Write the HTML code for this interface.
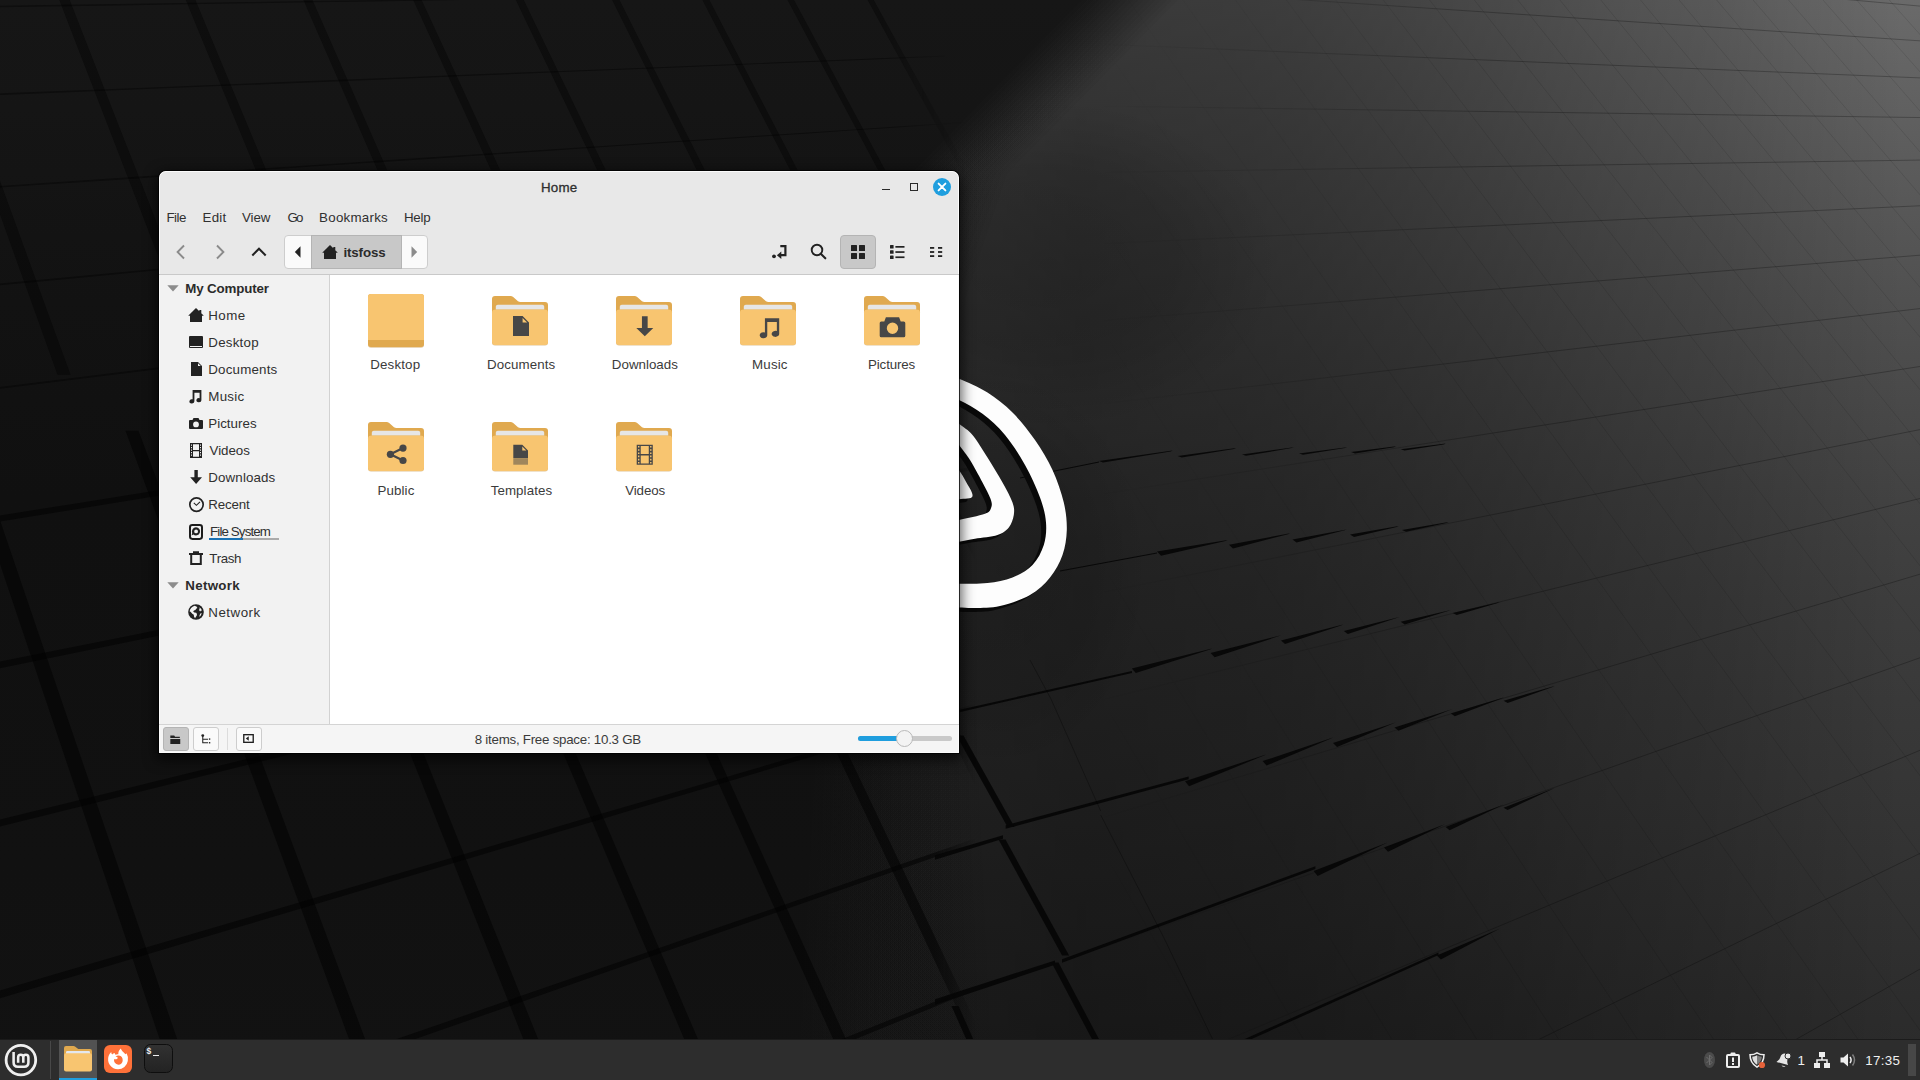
<!DOCTYPE html>
<html lang="en"><head><meta charset="utf-8"><title>Home</title>
<style>

*{box-sizing:border-box;margin:0;padding:0}
html,body{width:1920px;height:1080px;overflow:hidden;background:#161616}
body{position:relative;font-family:"Liberation Sans",sans-serif;font-size:13.33px;color:#303030;-webkit-font-smoothing:antialiased}
#wall{position:absolute;left:0;top:0;overflow:hidden}
.abs{position:absolute}
.t{position:absolute;white-space:nowrap;line-height:16px;height:16px;margin-top:1px}
#win{position:absolute;left:159px;top:171px;width:800px;height:582px;background:#e8e8e8;border-radius:7px 7px 0 0;box-shadow:0 0 0 1px rgba(0,0,0,.75),0 4px 14px 2px rgba(0,0,0,.7);overflow:hidden}
#win:after{content:"";position:absolute;left:0;top:0;right:0;bottom:0;border:1px solid #fbfbfb;border-radius:7px 7px 0 0;pointer-events:none}
#title{color:#2e2e2e;-webkit-text-stroke:.3px #2e2e2e}
.menu{color:#303030}
#tbline{left:0;top:103px;width:800px;height:1px;background:#c9c9c9;z-index:3}
#side{left:1px;top:104px;width:169px;height:449px;background:#f2f2f2}
#sideline{left:170px;top:104px;width:1px;height:449px;background:#d2d2d2}
#content{left:171px;top:104px;width:628px;height:449px;background:#fff}
#stline{left:0;top:553px;width:800px;height:1px;background:#d4d4d4;z-index:3}
#status{left:1px;top:554px;width:798px;height:27px;background:#f5f5f5}
.hdr{font-weight:bold;color:#2b2b2b}
.si{color:#303030}
.lbl{color:#3b3b3b}
.btn{position:absolute;border:1px solid #cdcdcd;background:#fafafa;border-radius:4px}
.btn.on{background:#c8c8c8;border-color:#b4b4b4}
#panel{position:absolute;left:0;top:1040px;width:1920px;height:40px;background:#2d2d2d;box-shadow:0 -1px 0 #1b1b1b}
.pt{color:#f0f0f0}
svg{position:absolute;overflow:visible}
#wall{overflow:hidden}

</style></head>
<body>
<svg id="wall" width="1920" height="1080" viewBox="0 0 1920 1080">
<defs>
<linearGradient id="lit" x1="0" y1="0" x2="0" y2="1080" gradientUnits="userSpaceOnUse"><stop offset="0.0000" stop-color="#6a6a6a"/><stop offset="0.0111" stop-color="#696969"/><stop offset="0.0926" stop-color="#616161"/><stop offset="0.1852" stop-color="#585858"/><stop offset="0.2778" stop-color="#505050"/><stop offset="0.3704" stop-color="#494949"/><stop offset="0.4630" stop-color="#424242"/><stop offset="0.5556" stop-color="#3d3d3d"/><stop offset="0.6481" stop-color="#393939"/><stop offset="0.7407" stop-color="#353535"/><stop offset="0.8333" stop-color="#313131"/><stop offset="0.9444" stop-color="#2c2c2c"/><stop offset="1.0000" stop-color="#2a2a2a"/></linearGradient><linearGradient id="ax" x1="0" y1="0" x2="1920" y2="0" gradientUnits="userSpaceOnUse"><stop offset="0.0000" stop-color="#000" stop-opacity="0.450"/><stop offset="0.5208" stop-color="#000" stop-opacity="0.440"/><stop offset="0.5625" stop-color="#000" stop-opacity="0.470"/><stop offset="0.5990" stop-color="#000" stop-opacity="0.455"/><stop offset="0.6458" stop-color="#000" stop-opacity="0.440"/><stop offset="0.6771" stop-color="#000" stop-opacity="0.420"/><stop offset="0.7292" stop-color="#000" stop-opacity="0.370"/><stop offset="0.7812" stop-color="#000" stop-opacity="0.310"/><stop offset="0.8333" stop-color="#000" stop-opacity="0.240"/><stop offset="0.8906" stop-color="#000" stop-opacity="0.170"/><stop offset="0.9375" stop-color="#000" stop-opacity="0.090"/><stop offset="0.9917" stop-color="#000" stop-opacity="0.000"/><stop offset="1.0000" stop-color="#000" stop-opacity="0.000"/></linearGradient><linearGradient id="shadec" x1="0" y1="0" x2="0" y2="1080" gradientUnits="userSpaceOnUse"><stop offset="0" stop-color="#161616"/><stop offset="0.1" stop-color="#151515"/><stop offset="0.28" stop-color="#121212"/><stop offset="0.46" stop-color="#101010"/><stop offset="0.8" stop-color="#111"/><stop offset="1" stop-color="#121212"/></linearGradient><radialGradient id="dip" cx="1050" cy="265" r="230" gradientUnits="userSpaceOnUse" gradientTransform="translate(1050,265) scale(1,0.72) translate(-1050,-265)"><stop offset="0" stop-color="#000" stop-opacity="0.17"/><stop offset="0.55" stop-color="#000" stop-opacity="0.13"/><stop offset="1" stop-color="#000" stop-opacity="0"/></radialGradient><radialGradient id="dip2" cx="1000" cy="570" r="200" gradientUnits="userSpaceOnUse" gradientTransform="translate(1000,570) scale(0.75,1) translate(-1000,-570)"><stop offset="0" stop-color="#000" stop-opacity="0.13"/><stop offset="0.6" stop-color="#000" stop-opacity="0.1"/><stop offset="1" stop-color="#000" stop-opacity="0"/></radialGradient><filter id="blur" filterUnits="userSpaceOnUse" x="-120" y="-120" width="1500" height="1320"><feGaussianBlur stdDeviation="26"/></filter>
<linearGradient id="shade" x1="1180" y1="28" x2="1085" y2="-25" gradientUnits="userSpaceOnUse">
<stop offset="0" stop-color="#111" stop-opacity="0"/><stop offset="1" stop-color="#111" stop-opacity="0.95"/>
</linearGradient>
<linearGradient id="leftdark" x1="1250" y1="0" x2="750" y2="0" gradientUnits="userSpaceOnUse">
<stop offset="0" stop-color="#131313" stop-opacity="0"/><stop offset="1" stop-color="#131313" stop-opacity="1"/>
</linearGradient>
<linearGradient id="fadeL" x1="1100" y1="0" x2="1500" y2="0" gradientUnits="userSpaceOnUse">
<stop offset="0" stop-color="#fff" stop-opacity="0"/><stop offset="1" stop-color="#fff" stop-opacity="1"/>
</linearGradient>
<mask id="mR"><rect width="1920" height="1080" fill="url(#fadeL)"/></mask>
<linearGradient id="fadeR" x1="935" y1="0" x2="975" y2="0" gradientUnits="userSpaceOnUse">
<stop offset="0" stop-color="#fff" stop-opacity="1"/><stop offset="1" stop-color="#fff" stop-opacity="0"/>
</linearGradient>
<mask id="mL"><rect width="1920" height="1080" fill="url(#fadeR)"/></mask>
<linearGradient id="fadeT" x1="880" y1="0" x2="965" y2="0" gradientUnits="userSpaceOnUse">
<stop offset="0" stop-color="#fff" stop-opacity="1"/><stop offset="1" stop-color="#fff" stop-opacity="0"/>
</linearGradient>
<mask id="mT"><rect width="1920" height="1080" fill="url(#fadeT)"/></mask>
</defs>
<rect width="1920" height="1080" fill="url(#lit)"/>
<rect width="1920" height="1080" fill="url(#ax)"/>
<rect x="780" y="60" width="540" height="420" fill="url(#dip)"/>
<rect x="840" y="360" width="320" height="420" fill="url(#dip2)"/>
<g fill="url(#shadec)"><polygon points="-100,-100 1276.0,-100 1178.0,0 1007.0,174 965.0,300 975.0,700 997.0,1180 -100,1180" fill-opacity="0.0556"/><polygon points="-100,-100 1270.4,-100 1172.4,0 1001.4,174 957.9,300 965.8,700 985.0,1180 -100,1180" fill-opacity="0.0588"/><polygon points="-100,-100 1264.7,-100 1166.7,0 995.7,174 950.9,300 956.6,700 973.0,1180 -100,1180" fill-opacity="0.0625"/><polygon points="-100,-100 1259.1,-100 1161.1,0 990.1,174 943.8,300 947.5,700 961.0,1180 -100,1180" fill-opacity="0.0667"/><polygon points="-100,-100 1253.4,-100 1155.4,0 984.4,174 936.8,300 938.3,700 949.0,1180 -100,1180" fill-opacity="0.0714"/><polygon points="-100,-100 1247.8,-100 1149.8,0 978.8,174 929.7,300 929.1,700 937.0,1180 -100,1180" fill-opacity="0.0769"/><polygon points="-100,-100 1242.1,-100 1144.1,0 973.1,174 922.6,300 919.9,700 925.0,1180 -100,1180" fill-opacity="0.0833"/><polygon points="-100,-100 1236.5,-100 1138.5,0 967.5,174 915.6,300 910.8,700 913.0,1180 -100,1180" fill-opacity="0.0909"/><polygon points="-100,-100 1230.8,-100 1132.8,0 961.8,174 908.5,300 901.6,700 901.0,1180 -100,1180" fill-opacity="0.1000"/><polygon points="-100,-100 1225.2,-100 1127.2,0 956.2,174 901.5,300 892.4,700 889.0,1180 -100,1180" fill-opacity="0.1111"/><polygon points="-100,-100 1219.5,-100 1121.5,0 950.5,174 894.4,300 883.2,700 877.0,1180 -100,1180" fill-opacity="0.1250"/><polygon points="-100,-100 1213.9,-100 1115.9,0 944.9,174 887.4,300 874.1,700 865.0,1180 -100,1180" fill-opacity="0.1429"/><polygon points="-100,-100 1208.2,-100 1110.2,0 939.2,174 880.3,300 864.9,700 853.0,1180 -100,1180" fill-opacity="0.1667"/><polygon points="-100,-100 1202.6,-100 1104.6,0 933.6,174 873.2,300 855.7,700 841.0,1180 -100,1180" fill-opacity="0.2000"/><polygon points="-100,-100 1196.9,-100 1098.9,0 927.9,174 866.2,300 846.5,700 829.0,1180 -100,1180" fill-opacity="0.2500"/><polygon points="-100,-100 1191.3,-100 1093.3,0 922.3,174 859.1,300 837.4,700 817.0,1180 -100,1180" fill-opacity="0.3333"/><polygon points="-100,-100 1185.6,-100 1087.6,0 916.6,174 852.1,300 828.2,700 805.0,1180 -100,1180" fill-opacity="0.5000"/><polygon points="-100,-100 1180.0,-100 1082.0,0 911.0,174 845.0,300 819.0,700 793.0,1180 -100,1180" fill-opacity="1.0000"/></g>
<g fill="#030303" fill-opacity="0.6" mask="url(#mL)"><polygon points="-879.5,571.9 -864.7,655.7 -849.4,742.0 -833.7,831.1 -817.5,922.9 -800.8,1017.7 -783.5,1115.6 -765.7,1216.7 -747.3,1321.3 -728.3,1429.4 -708.6,1541.3 -688.2,1657.1 -667.1,1777.2 -645.2,1901.6 -622.5,2030.8 -599.0,2164.8 -574.5,2304.1 -549.1,2449.0 -510.1,2449.0 -537.0,2304.1 -562.9,2164.8 -587.8,2030.8 -611.7,1901.6 -634.8,1777.2 -657.0,1657.1 -678.5,1541.3 -699.2,1429.4 -719.2,1321.3 -738.6,1216.7 -757.3,1115.6 -775.4,1017.7 -792.9,922.9 -809.8,831.1 -826.3,742.0 -842.2,655.7 -857.7,571.9"/><polygon points="-633.6,537.4 -616.1,615.9 -598.2,696.8 -579.7,780.0 -560.6,865.6 -541.0,953.9 -520.8,1044.8 -500.0,1138.6 -478.5,1235.4 -456.3,1335.2 -433.4,1438.3 -409.8,1544.8 -385.4,1655.0 -360.1,1768.9 -334.0,1886.7 -306.9,2008.8 -278.9,2135.2 -249.9,2266.4 -216.4,2266.4 -246.6,2135.2 -275.8,2008.8 -303.9,1886.7 -331.0,1768.9 -357.3,1655.0 -382.6,1544.8 -407.1,1438.3 -430.8,1335.2 -453.8,1235.4 -476.1,1138.6 -497.6,1044.8 -518.5,953.9 -538.8,865.6 -558.5,780.0 -577.6,696.8 -596.1,615.9 -614.2,537.4"/><polygon points="-413.7,506.5 -394.2,580.4 -374.2,656.4 -353.6,734.5 -332.4,814.7 -310.6,897.3 -288.2,982.2 -265.2,1069.6 -241.5,1159.6 -217.0,1252.3 -191.9,1347.9 -165.9,1446.4 -139.1,1548.1 -111.5,1653.0 -83.0,1761.3 -53.5,1873.3 -23.1,1989.0 8.4,2108.7 37.5,2108.7 5.0,1989.0 -26.3,1873.3 -56.7,1761.3 -86.0,1653.0 -114.4,1548.1 -142.0,1446.4 -168.7,1347.9 -194.5,1252.3 -219.6,1159.6 -244.0,1069.6 -267.7,982.2 -290.6,897.3 -313.0,814.7 -334.7,734.5 -355.8,656.4 -376.3,580.4 -396.3,506.5"/><polygon points="-215.9,478.7 -194.9,548.5 -173.3,620.2 -151.1,693.7 -128.4,769.2 -105.0,846.7 -81.0,926.3 -56.3,1008.2 -31.0,1092.3 -4.9,1178.8 21.9,1267.8 49.5,1359.5 77.9,1453.8 107.2,1551.0 137.4,1651.2 168.4,1754.5 200.5,1861.1 233.6,1971.1 259.1,1971.1 225.2,1861.1 192.4,1754.5 160.6,1651.2 129.7,1551.0 99.8,1453.8 70.7,1359.5 42.5,1267.8 15.1,1178.8 -11.5,1092.3 -37.4,1008.2 -62.6,926.3 -87.1,846.7 -110.9,769.2 -134.1,693.7 -156.7,620.2 -178.7,548.5 -200.2,478.7"/><polygon points="-37.1,453.5 -14.8,519.7 7.9,587.5 31.3,657.0 55.2,728.2 79.7,801.3 104.9,876.2 130.7,953.1 157.3,1032.1 184.5,1113.2 212.4,1196.5 241.2,1282.1 270.7,1370.1 301.1,1460.6 332.3,1553.7 364.5,1649.6 397.6,1748.3 431.7,1850.0 454.2,1850.0 419.5,1748.3 385.7,1649.6 353.0,1553.7 321.1,1460.6 290.2,1370.1 260.1,1282.1 230.9,1196.5 202.4,1113.2 174.7,1032.1 147.8,953.1 121.5,876.2 95.9,801.3 71.0,728.2 46.6,657.0 22.9,587.5 -0.2,519.7 -22.8,453.5"/><polygon points="125.5,430.7 148.6,493.5 172.2,557.9 196.4,623.7 221.2,691.2 246.6,760.2 272.6,831.0 299.2,903.5 326.6,977.9 354.6,1054.2 383.3,1132.4 412.8,1212.7 443.1,1295.2 474.2,1379.8 506.1,1466.8 538.9,1556.2 572.6,1648.1 607.3,1742.6 627.4,1742.6 592.1,1648.1 557.9,1556.2 524.5,1466.8 492.1,1379.8 460.6,1295.2 429.8,1212.7 399.9,1132.4 370.7,1054.2 342.3,977.9 314.6,903.5 287.6,831.0 261.2,760.2 235.5,691.2 210.4,623.7 185.8,557.9 161.9,493.5 138.5,430.7"/><polygon points="273.8,409.8 297.6,469.7 321.8,530.9 346.7,593.5 372.0,657.5 398.0,723.0 424.6,790.0 451.8,858.6 479.6,928.9 508.2,1000.9 537.4,1074.7 567.4,1150.3 598.1,1227.8 629.6,1307.3 661.9,1388.9 695.1,1472.6 729.1,1558.5 764.1,1646.7 782.0,1646.7 746.6,1558.5 712.1,1472.6 678.5,1388.9 645.8,1307.3 613.9,1227.8 582.8,1150.3 552.4,1074.7 522.8,1000.9 493.9,928.9 465.7,858.6 438.2,790.0 411.3,723.0 385.0,657.5 359.4,593.5 334.3,530.9 309.7,469.7 285.7,409.8"/><polygon points="409.8,390.7 434.0,447.8 458.7,506.2 483.9,565.8 509.7,626.7 536.1,689.0 563.0,752.7 590.6,817.8 618.8,884.4 647.6,952.5 677.1,1022.3 707.3,1093.7 738.3,1166.9 770.0,1241.8 802.4,1318.5 835.7,1397.2 869.8,1477.9 904.8,1560.6 921.0,1560.6 885.6,1477.9 851.1,1397.2 817.4,1318.5 784.6,1241.8 752.6,1166.9 721.3,1093.7 690.7,1022.3 660.9,952.5 631.8,884.4 603.3,817.8 575.4,752.7 548.2,689.0 521.6,626.7 495.6,565.8 470.1,506.2 445.1,447.8 420.7,390.7"/><polygon points="534.8,373.1 559.3,427.8 584.3,483.5 609.8,540.4 635.8,598.5 662.4,657.9 689.6,718.5 717.3,780.5 745.7,843.7 774.7,908.4 804.3,974.6 834.6,1042.3 865.6,1111.5 897.3,1182.3 929.8,1254.8 963.0,1329.0 997.1,1404.9 1031.9,1482.8 1046.6,1482.8 1011.4,1404.9 977.0,1329.0 943.5,1254.8 910.7,1182.3 878.7,1111.5 847.4,1042.3 816.8,974.6 786.9,908.4 757.6,843.7 729.0,780.5 701.0,718.5 673.6,657.9 646.8,598.5 620.5,540.4 594.8,483.5 569.6,427.8 544.9,373.1"/><polygon points="650.2,356.9 674.9,409.3 700.0,462.6 725.7,517.1 751.9,572.6 778.6,629.3 805.8,687.2 833.6,746.2 862.0,806.5 891.0,868.1 920.7,931.0 950.9,995.2 981.9,1060.9 1013.5,1128.0 1045.8,1196.7 1078.9,1266.9 1112.7,1338.7 1147.3,1412.2 1160.6,1412.2 1125.7,1338.7 1091.6,1266.9 1058.3,1196.7 1025.7,1128.0 993.8,1060.9 962.6,995.2 932.1,931.0 902.2,868.1 873.0,806.5 844.3,746.2 816.3,687.2 788.8,629.3 761.9,572.6 735.6,517.1 709.7,462.6 684.4,409.3 659.5,356.9"/><polygon points="757.0,341.9 781.8,392.1 807.0,443.3 832.7,495.5 858.9,548.7 885.6,602.9 912.9,658.3 940.7,714.7 969.0,772.2 997.9,831.0 1027.5,890.9 1057.6,952.1 1088.4,1014.6 1119.8,1078.4 1151.9,1143.5 1184.7,1210.1 1218.2,1278.2 1252.4,1347.8 1264.6,1347.8 1230.1,1278.2 1196.3,1210.1 1163.3,1143.5 1130.9,1078.4 1099.3,1014.6 1068.3,952.1 1038.0,890.9 1008.2,831.0 979.1,772.2 950.5,714.7 922.6,658.3 895.1,602.9 868.2,548.7 841.9,495.5 816.0,443.3 790.6,392.1 765.7,341.9"/><polygon points="856.2,327.9 881.0,376.2 906.2,425.4 931.9,475.5 958.0,526.6 984.7,578.6 1011.8,631.5 1039.5,685.6 1067.7,740.6 1096.5,796.7 1125.8,854.0 1155.8,912.4 1186.3,971.9 1217.4,1032.7 1249.2,1094.8 1281.7,1158.1 1314.8,1222.8 1348.6,1288.8 1359.8,1288.8 1325.8,1222.8 1292.4,1158.1 1259.7,1094.8 1227.7,1032.7 1196.4,971.9 1165.6,912.4 1135.5,854.0 1106.0,796.7 1077.0,740.6 1048.7,685.6 1020.8,631.5 993.5,578.6 966.7,526.6 940.3,475.5 914.5,425.4 889.1,376.2 864.2,327.9"/><polygon points="-1132.3,695.2 -988.5,672.4 -853.4,651.0 -726.2,630.8 -606.1,611.7 -492.7,593.7 -385.3,576.7 -283.5,560.5 -186.8,545.1 -95.0,530.5 -7.5,516.6 75.8,503.4 155.2,490.8 231.1,478.7 303.7,467.1 373.1,456.1 439.6,445.5 503.3,435.4 564.5,425.6 623.2,416.3 679.6,407.3 733.9,398.6 786.2,390.3 836.5,382.3 885.1,374.5 931.9,367.1 931.9,370.4 885.1,377.9 836.5,385.8 786.2,394.0 733.9,402.4 679.6,411.2 623.2,420.4 564.5,429.9 503.3,439.8 439.6,450.2 373.1,461.0 303.7,472.2 231.1,484.0 155.2,496.3 75.8,509.2 -7.5,522.8 -95.0,537.0 -186.8,551.9 -283.5,567.6 -385.3,584.2 -492.7,601.7 -606.1,620.1 -726.2,639.7 -853.4,660.4 -988.5,682.4 -1132.3,705.8"/><polygon points="-1107.7,883.2 -960.2,853.7 -821.8,826.1 -691.6,800.0 -569.1,775.5 -453.4,752.4 -344.1,730.5 -240.7,709.8 -142.6,690.1 -49.5,671.5 39.0,653.8 123.2,636.9 203.4,620.8 279.9,605.4 353.0,590.8 422.9,576.8 489.7,563.4 553.8,550.5 615.2,538.2 674.1,526.4 730.6,515.0 785.0,504.1 837.3,493.6 887.6,483.5 936.1,473.7 982.8,464.4 982.8,467.8 936.1,477.3 887.6,487.2 837.3,497.4 785.0,508.1 730.6,519.2 674.1,530.7 615.2,542.7 553.8,555.2 489.7,568.2 422.9,581.9 353.0,596.1 279.9,611.0 203.4,626.6 123.2,643.0 39.0,660.2 -49.5,678.3 -142.6,697.3 -240.7,717.3 -344.1,738.4 -453.4,760.8 -569.1,784.4 -691.6,809.5 -821.8,836.1 -960.2,864.4 -1107.7,894.6"/><polygon points="-1081.5,1084.1 -930.0,1047.1 -788.1,1012.4 -654.9,979.8 -529.8,949.2 -411.9,920.3 -300.6,893.1 -195.5,867.3 -96.0,842.9 -1.7,819.8 87.8,797.9 172.9,777.0 253.9,757.2 331.1,738.2 404.7,720.2 474.9,702.9 542.1,686.4 606.4,670.7 668.0,655.6 727.1,641.1 783.7,627.1 838.1,613.8 890.4,601.0 940.7,588.6 989.1,576.7 1035.7,565.3 1035.7,568.8 989.1,580.4 940.7,592.4 890.4,604.9 838.1,617.9 783.7,631.5 727.1,645.6 668.0,660.2 606.4,675.6 542.1,691.6 474.9,708.3 404.7,725.8 331.1,744.1 253.9,763.3 172.9,783.5 87.8,804.7 -1.7,827.0 -96.0,850.5 -195.5,875.3 -300.6,901.5 -411.9,929.2 -529.8,958.6 -654.9,989.8 -788.1,1023.1 -930.0,1058.5 -1081.5,1096.3"/><polygon points="-1053.5,1299.3 -897.7,1253.7 -752.1,1211.0 -615.9,1171.1 -488.0,1133.6 -367.8,1098.3 -254.6,1065.1 -147.8,1033.8 -46.9,1004.2 48.7,976.1 139.2,949.6 225.2,924.3 306.9,900.3 384.7,877.5 458.8,855.7 529.4,834.9 596.9,815.1 661.4,796.2 723.2,778.0 782.3,760.6 839.0,744.0 893.4,728.0 945.6,712.6 995.8,697.8 1044.1,683.6 1090.6,670.0 1090.6,673.7 1044.1,687.5 995.8,701.8 945.6,716.7 893.4,732.3 839.0,748.5 782.3,765.3 723.2,782.9 661.4,801.3 596.9,820.5 529.4,840.5 458.8,861.6 384.7,883.6 306.9,906.8 225.2,931.1 139.2,956.7 48.7,983.7 -46.9,1012.1 -147.8,1042.2 -254.6,1074.0 -367.8,1107.8 -488.0,1143.6 -615.9,1181.8 -752.1,1222.4 -897.7,1265.9 -1053.5,1312.4"/><polygon points="-1023.4,1530.3 -863.1,1474.9 -713.7,1423.3 -574.2,1375.0 -443.6,1329.9 -321.0,1287.5 -205.8,1247.6 -97.3,1210.0 5.1,1174.6 101.9,1141.1 193.4,1109.4 280.3,1079.3 362.7,1050.8 441.0,1023.7 515.5,997.8 586.5,973.2 654.3,949.8 718.9,927.3 780.8,905.9 839.9,885.4 896.6,865.7 951.0,846.9 1003.1,828.8 1053.1,811.4 1101.3,794.7 1147.5,778.7 1147.5,782.5 1101.3,798.7 1053.1,815.6 1003.1,833.1 951.0,851.4 896.6,870.4 839.9,890.3 780.8,911.0 718.9,932.7 654.3,955.3 586.5,979.1 515.5,1004.0 441.0,1030.1 362.7,1057.6 280.3,1086.5 193.4,1116.9 101.9,1149.1 5.1,1183.0 -97.3,1219.0 -205.8,1257.1 -321.0,1297.5 -443.6,1340.6 -574.2,1386.4 -713.7,1435.5 -863.1,1488.0 -1023.4,1544.3"/><polygon points="-990.9,1778.9 -826.0,1712.4 -672.6,1650.6 -529.7,1593.0 -396.2,1539.1 -271.2,1488.7 -153.9,1441.4 -43.7,1396.9 60.1,1355.0 158.1,1315.5 250.6,1278.1 338.3,1242.7 421.3,1209.2 500.1,1177.3 575.1,1147.1 646.4,1118.2 714.3,1090.8 779.1,1064.6 841.0,1039.6 900.2,1015.7 956.8,992.8 1011.0,970.9 1062.9,949.8 1112.8,929.7 1160.7,910.3 1206.7,891.7 1206.7,895.7 1160.7,914.5 1112.8,934.0 1062.9,954.3 1011.0,975.6 956.8,997.7 900.2,1020.8 841.0,1044.9 779.1,1070.2 714.3,1096.7 646.4,1124.4 575.1,1153.5 500.1,1184.1 421.3,1216.3 338.3,1250.3 250.6,1286.1 158.1,1323.9 60.1,1363.9 -43.7,1406.4 -153.9,1451.5 -271.2,1499.4 -396.2,1550.6 -529.7,1605.2 -672.6,1663.7 -826.0,1726.5 -990.9,1794.0"/><polygon points="-955.9,2047.2 -786.0,1968.0 -628.4,1894.6 -482.0,1826.4 -345.6,1762.8 -218.1,1703.3 -98.8,1647.6 13.2,1595.4 118.5,1546.3 217.6,1500.0 311.1,1456.4 399.5,1415.1 483.1,1376.1 562.4,1339.1 637.7,1303.9 709.2,1270.5 777.3,1238.7 842.1,1208.4 904.0,1179.5 963.1,1151.9 1019.6,1125.5 1073.6,1100.2 1125.4,1076.0 1175.0,1052.8 1222.6,1030.6 1268.3,1009.2 1268.3,1013.3 1222.6,1034.9 1175.0,1057.3 1125.4,1080.7 1073.6,1105.1 1019.6,1130.6 963.1,1157.2 904.0,1185.1 842.1,1214.3 777.3,1244.8 709.2,1277.0 637.7,1310.7 562.4,1346.2 483.1,1383.6 399.5,1423.1 311.1,1464.8 217.6,1509.0 118.5,1555.8 13.2,1605.5 -98.8,1658.4 -218.1,1714.7 -345.6,1775.0 -482.0,1839.5 -628.4,1908.7 -786.0,1983.2 -955.9,2063.6"/><polygon points="-918.0,2337.7 -742.8,2243.9 -580.9,2157.3 -430.8,2076.9 -291.3,2002.2 -161.4,1932.6 -39.9,1867.6 73.8,1806.7 180.4,1749.5 280.7,1695.8 375.1,1645.1 464.2,1597.4 548.4,1552.2 628.1,1509.5 703.6,1469.0 775.3,1430.5 843.4,1394.0 908.2,1359.2 970.0,1326.0 1029.0,1294.4 1085.2,1264.2 1139.0,1235.3 1190.5,1207.7 1239.8,1181.2 1287.0,1155.9 1332.4,1131.5 1332.4,1135.8 1287.0,1160.4 1239.8,1185.9 1190.5,1212.6 1139.0,1240.4 1085.2,1269.5 1029.0,1300.0 970.0,1331.9 908.2,1365.3 843.4,1400.4 775.3,1437.3 703.6,1476.1 628.1,1517.0 548.4,1560.2 464.2,1605.8 375.1,1654.1 280.7,1705.2 180.4,1759.5 73.8,1817.4 -39.9,1879.0 -161.4,1944.8 -291.3,2015.3 -430.8,2091.0 -580.9,2172.4 -742.8,2260.3 -918.0,2355.4"/></g>
<g fill="#030303" fill-opacity="0.4" mask="url(#mT)"><polygon points="-791.8,-200.6 -778.6,-141.9 -765.1,-81.6 -751.2,-19.9 -737.0,43.5 -722.5,108.4 -707.6,175.1 -692.2,243.5 -676.5,313.8 -660.3,386.0 -643.7,460.1 -624.9,460.1 -642.0,386.0 -658.6,313.8 -674.9,243.5 -690.6,175.1 -706.0,108.4 -721.0,43.5 -735.6,-19.9 -749.8,-81.6 -763.7,-141.9 -777.2,-200.6"/><polygon points="-608.2,-194.2 -593.5,-137.8 -578.3,-80.2 -562.9,-21.1 -547.0,39.4 -530.7,101.4 -514.1,164.9 -497.0,230.0 -479.5,296.8 -461.5,365.4 -443.1,435.7 -426.0,435.7 -444.9,365.4 -463.3,296.8 -481.2,230.0 -498.7,164.9 -515.7,101.4 -532.3,39.4 -548.5,-21.1 -564.4,-80.2 -579.8,-137.8 -594.9,-194.2"/><polygon points="-439.7,-188.2 -423.6,-134.1 -407.2,-78.8 -390.4,-22.3 -373.2,35.6 -355.5,94.9 -337.5,155.6 -319.1,217.8 -300.1,281.4 -280.8,346.7 -260.9,413.6 -245.3,413.6 -265.6,346.7 -285.3,281.4 -304.6,217.8 -323.4,155.6 -341.8,94.9 -359.7,35.6 -377.2,-22.3 -394.3,-78.8 -411.1,-134.1 -427.4,-188.2"/><polygon points="-284.4,-182.7 -267.2,-130.7 -249.7,-77.6 -231.8,-23.3 -213.6,32.2 -194.9,89.0 -175.7,147.1 -156.2,206.5 -136.2,267.3 -115.7,329.6 -94.7,393.3 -80.5,393.3 -101.8,329.6 -122.6,267.3 -142.9,206.5 -162.8,147.1 -182.2,89.0 -201.2,32.2 -219.7,-23.3 -237.9,-77.6 -255.6,-130.7 -273.0,-182.7"/><polygon points="-140.7,-177.7 -122.7,-127.6 -104.4,-76.5 -85.7,-24.3 -66.5,29.1 -47.0,83.6 -27.0,139.2 -6.6,196.2 14.3,254.4 35.7,313.9 57.5,374.8 70.6,374.8 48.4,313.9 26.8,254.4 5.6,196.2 -15.1,139.2 -35.3,83.6 -55.1,29.1 -74.5,-24.3 -93.5,-76.5 -112.0,-127.6 -130.2,-177.7"/><polygon points="-7.5,-173.0 11.1,-124.7 30.2,-75.4 49.6,-25.2 69.4,26.2 89.6,78.5 110.3,132.0 131.4,186.6 152.9,242.5 175.0,299.5 197.5,357.8 209.5,357.8 186.7,299.5 164.4,242.5 142.7,186.6 121.3,132.0 100.4,78.5 80.0,26.2 59.9,-25.2 40.3,-75.4 21.1,-124.7 2.2,-173.0"/><polygon points="116.3,-168.6 135.5,-122.0 155.1,-74.5 175.1,-26.0 195.4,23.4 216.2,73.9 237.3,125.3 259.0,177.8 281.0,231.4 303.6,286.2 326.6,342.0 337.7,342.0 314.4,286.2 291.7,231.4 269.4,177.8 247.6,125.3 226.2,73.9 205.2,23.4 184.7,-26.0 164.5,-74.5 144.8,-122.0 125.4,-168.6"/><polygon points="231.8,-164.5 251.4,-119.5 271.4,-73.5 291.8,-26.8 312.5,20.9 333.7,69.5 355.3,119.1 377.3,169.7 399.7,221.2 422.6,273.8 446.0,327.5 456.3,327.5 432.7,273.8 409.6,221.2 387.0,169.7 364.8,119.1 343.0,69.5 321.7,20.9 300.7,-26.8 280.2,-73.5 260.0,-119.5 240.3,-164.5"/><polygon points="339.7,-160.7 359.6,-117.1 380.0,-72.7 400.6,-27.5 421.7,18.6 443.2,65.5 465.1,113.3 487.3,162.1 510.1,211.7 533.2,262.4 556.8,314.0 566.4,314.0 542.6,262.4 519.3,211.7 496.4,162.1 473.9,113.3 451.9,65.5 430.2,18.6 409.0,-27.5 388.2,-72.7 367.7,-117.1 347.6,-160.7"/><polygon points="440.7,-157.1 460.9,-114.9 481.5,-71.9 502.4,-28.1 523.7,16.4 545.4,61.8 567.5,107.9 590.0,155.0 612.9,202.9 636.2,251.7 660.0,301.4 668.9,301.4 644.9,251.7 621.5,202.9 598.4,155.0 575.8,107.9 553.5,61.8 531.7,16.4 510.3,-28.1 489.2,-71.9 468.5,-114.9 448.2,-157.1"/><polygon points="535.6,-153.8 556.0,-112.8 576.7,-71.2 597.8,-28.8 619.2,14.3 641.1,58.2 663.3,102.9 685.9,148.3 708.9,194.6 732.3,241.7 756.2,289.7 764.5,289.7 740.5,241.7 716.9,194.6 693.8,148.3 671.0,102.9 648.7,58.2 626.7,14.3 605.1,-28.8 583.9,-71.2 563.1,-112.8 542.6,-153.8"/><polygon points="624.8,-150.7 645.3,-110.9 666.1,-70.5 687.3,-29.4 708.8,12.4 730.8,54.9 753.0,98.2 775.7,142.1 798.8,186.9 822.3,232.4 846.2,278.8 853.9,278.8 829.9,232.4 806.3,186.9 783.1,142.1 760.3,98.2 737.9,54.9 715.9,12.4 694.2,-29.4 672.9,-70.5 651.9,-110.9 631.3,-150.7"/><polygon points="708.8,-147.7 729.3,-109.1 750.3,-69.8 771.5,-29.9 793.1,10.6 815.0,51.8 837.4,93.7 860.1,136.3 883.1,179.6 906.6,223.7 930.5,268.5 937.8,268.5 913.8,223.7 890.2,179.6 867.0,136.3 844.2,93.7 821.8,51.8 799.7,10.6 778.0,-29.9 756.7,-69.8 735.6,-109.1 715.0,-147.7"/><polygon points="788.1,-144.9 808.7,-107.3 829.6,-69.2 850.9,-30.4 872.5,8.9 894.4,48.9 916.7,89.5 939.4,130.8 962.4,172.8 985.8,215.5 1009.6,258.8 1016.5,258.8 992.6,215.5 969.0,172.8 945.9,130.8 923.1,89.5 900.7,48.9 878.7,8.9 857.0,-30.4 835.6,-69.2 814.6,-107.3 793.9,-144.9"/><polygon points="-1005.5,-187.7 -893.0,-184.2 -786.0,-180.9 -684.0,-177.7 -586.7,-174.7 -493.8,-171.8 -405.1,-169.1 -320.1,-166.4 -238.8,-163.9 -160.8,-161.5 -86.0,-159.2 -14.2,-157.0 54.9,-154.8 121.3,-152.8 185.2,-150.8 246.7,-148.9 306.0,-147.0 363.2,-145.3 418.4,-143.6 471.8,-141.9 523.3,-140.3 573.1,-138.8 621.3,-137.3 667.9,-135.9 713.0,-134.5 756.8,-133.1 799.2,-131.8 840.4,-130.6 840.4,-129.8 799.2,-131.0 756.8,-132.3 713.0,-133.6 667.9,-135.0 621.3,-136.4 573.1,-137.8 523.3,-139.3 471.8,-140.9 418.4,-142.5 363.2,-144.2 306.0,-145.9 246.7,-147.7 185.2,-149.5 121.3,-151.5 54.9,-153.5 -14.2,-155.6 -86.0,-157.7 -160.8,-160.0 -238.8,-162.3 -320.1,-164.8 -405.1,-167.3 -493.8,-170.0 -586.7,-172.8 -684.0,-175.7 -786.0,-178.8 -893.0,-182.0 -1005.5,-185.4"/><polygon points="-987.1,-85.9 -872.8,-84.9 -764.1,-84.0 -660.6,-83.1 -562.0,-82.2 -468.0,-81.4 -378.1,-80.7 -292.3,-79.9 -210.1,-79.2 -131.4,-78.5 -55.9,-77.9 16.5,-77.3 86.0,-76.7 152.9,-76.1 217.2,-75.6 279.0,-75.1 338.7,-74.6 396.1,-74.1 451.5,-73.6 505.0,-73.1 556.7,-72.7 606.6,-72.3 654.9,-71.9 701.6,-71.5 746.8,-71.1 790.6,-70.7 833.0,-70.4 874.2,-70.0 874.2,-69.2 833.0,-69.5 790.6,-69.9 746.8,-70.2 701.6,-70.6 654.9,-70.9 606.6,-71.3 556.7,-71.7 505.0,-72.1 451.5,-72.5 396.1,-72.9 338.7,-73.4 279.0,-73.8 217.2,-74.3 152.9,-74.8 86.0,-75.3 16.5,-75.9 -55.9,-76.4 -131.4,-77.0 -210.1,-77.6 -292.3,-78.2 -378.1,-78.9 -468.0,-79.6 -562.0,-80.3 -660.6,-81.0 -764.1,-81.8 -872.8,-82.7 -987.1,-83.5"/><polygon points="-968.0,20.3 -851.7,18.6 -741.3,16.9 -636.3,15.3 -536.3,13.8 -441.1,12.4 -350.2,11.0 -263.4,9.7 -180.4,8.5 -100.9,7.3 -24.8,6.1 48.2,5.0 118.2,4.0 185.5,3.0 250.2,2.0 312.4,1.1 372.3,0.2 430.0,-0.7 485.6,-1.6 539.3,-2.4 591.1,-3.2 641.1,-3.9 689.5,-4.7 736.2,-5.4 781.5,-6.0 825.3,-6.7 867.7,-7.4 908.8,-8.0 908.8,-7.1 867.7,-6.5 825.3,-5.8 781.5,-5.1 736.2,-4.4 689.5,-3.7 641.1,-2.9 591.1,-2.1 539.3,-1.3 485.6,-0.4 430.0,0.5 372.3,1.4 312.4,2.3 250.2,3.3 185.5,4.3 118.2,5.4 48.2,6.5 -24.8,7.7 -100.9,8.9 -180.4,10.2 -263.4,11.5 -350.2,12.9 -441.1,14.3 -536.3,15.9 -636.3,17.5 -741.3,19.1 -851.7,20.9 -968.0,22.8"/><polygon points="-947.9,131.2 -829.7,126.5 -717.5,122.0 -611.0,117.8 -509.6,113.8 -413.2,109.9 -321.2,106.2 -233.4,102.7 -149.6,99.4 -69.4,96.2 7.4,93.1 80.9,90.2 151.5,87.4 219.2,84.7 284.2,82.1 346.8,79.6 406.9,77.2 464.9,74.8 520.7,72.6 574.5,70.5 626.5,68.4 676.6,66.4 725.0,64.4 771.8,62.6 817.1,60.8 860.9,59.0 903.3,57.3 944.4,55.7 944.4,56.5 903.3,58.2 860.9,59.9 817.1,61.7 771.8,63.5 725.0,65.5 676.6,67.4 626.5,69.5 574.5,71.6 520.7,73.8 464.9,76.1 406.9,78.4 346.8,80.9 284.2,83.4 219.2,86.1 151.5,88.8 80.9,91.7 7.4,94.7 -69.4,97.9 -149.6,101.1 -233.4,104.6 -321.2,108.2 -413.2,111.9 -509.6,115.9 -611.0,120.0 -717.5,124.4 -829.7,129.0 -947.9,133.8"/><polygon points="-927.0,247.1 -806.7,239.2 -692.7,231.7 -584.6,224.5 -481.9,217.7 -384.1,211.3 -291.1,205.1 -202.3,199.3 -117.6,193.7 -36.7,188.3 40.7,183.2 114.8,178.3 185.9,173.6 254.0,169.1 319.4,164.7 382.3,160.6 442.7,156.6 500.9,152.7 556.9,149.0 610.8,145.5 662.8,142.0 713.1,138.7 761.5,135.5 808.4,132.4 853.6,129.4 897.4,126.5 939.8,123.7 980.8,120.9 980.8,121.8 939.8,124.6 897.4,127.4 853.6,130.3 808.4,133.4 761.5,136.5 713.1,139.8 662.8,143.1 610.8,146.6 556.9,150.2 500.9,154.0 442.7,157.9 382.3,161.9 319.4,166.1 254.0,170.5 185.9,175.1 114.8,179.9 40.7,184.8 -36.7,190.0 -117.6,195.5 -202.3,201.2 -291.1,207.1 -384.1,213.4 -481.9,219.9 -584.6,226.8 -692.7,234.1 -806.7,241.8 -927.0,249.8"/><polygon points="-905.1,368.4 -782.7,357.0 -666.8,346.1 -557.1,335.8 -452.9,326.0 -353.9,316.8 -259.8,307.9 -170.1,299.5 -84.5,291.5 -2.8,283.8 75.2,276.5 149.9,269.5 221.5,262.8 290.0,256.3 355.8,250.2 418.9,244.2 479.6,238.5 537.9,233.1 594.1,227.8 648.2,222.7 700.3,217.8 750.6,213.1 799.1,208.5 846.0,204.1 891.2,199.9 935.0,195.8 977.3,191.8 1018.3,187.9 1018.3,188.8 977.3,192.7 935.0,196.7 891.2,200.9 846.0,205.2 799.1,209.6 750.6,214.2 700.3,219.0 648.2,223.9 594.1,229.0 537.9,234.4 479.6,239.9 418.9,245.6 355.8,251.6 290.0,257.9 221.5,264.4 149.9,271.1 75.2,278.2 -2.8,285.6 -84.5,293.4 -170.1,301.5 -259.8,310.0 -353.9,318.9 -452.9,328.3 -557.1,338.2 -666.8,348.6 -782.7,359.6 -905.1,371.3"/><polygon points="-882.1,495.5 -757.5,480.2 -639.8,465.7 -528.4,452.0 -422.7,439.0 -322.5,426.6 -227.2,414.9 -136.5,403.7 -50.1,393.1 32.3,382.9 111.1,373.2 186.3,364.0 258.3,355.1 327.2,346.6 393.3,338.5 456.8,330.7 517.7,323.2 576.2,315.9 632.5,309.0 686.7,302.3 738.9,295.9 789.2,289.7 837.8,283.7 884.6,277.9 929.8,272.4 973.5,267.0 1015.8,261.8 1056.7,256.7 1056.7,257.6 1015.8,262.7 973.5,268.0 929.8,273.4 884.6,279.0 837.8,284.8 789.2,290.8 738.9,297.1 686.7,303.6 632.5,310.3 576.2,317.3 517.7,324.5 456.8,332.1 393.3,340.0 327.2,348.2 258.3,356.7 186.3,365.7 111.1,375.0 32.3,384.8 -50.1,395.0 -136.5,405.8 -227.2,417.0 -322.5,428.9 -422.7,441.4 -528.4,454.5 -639.8,468.3 -757.5,483.0 -882.1,498.5"/></g>
<g stroke="#000" stroke-width="1" mask="url(#mR)"><g stroke-opacity="0.26"><line x1="900" y1="-192.8" x2="1930" y2="-55.7"/><line x1="900" y1="-140.9" x2="1930" y2="-25.3"/><line x1="900" y1="-85.7" x2="1930" y2="7.0"/><line x1="900" y1="-26.8" x2="1930" y2="41.5"/><line x1="900" y1="36.0" x2="1930" y2="78.3"/><line x1="900" y1="103.3" x2="1930" y2="117.7"/><line x1="900" y1="175.4" x2="1930" y2="159.9"/><line x1="900" y1="253.0" x2="1930" y2="205.3"/><line x1="900" y1="336.7" x2="1930" y2="254.4"/><line x1="900" y1="427.3" x2="1930" y2="307.4"/><line x1="900" y1="525.5" x2="1930" y2="364.9"/><line x1="900" y1="632.5" x2="1930" y2="427.6"/><line x1="900" y1="749.5" x2="1930" y2="496.0"/><line x1="900" y1="877.9" x2="1930" y2="571.2"/><line x1="900" y1="1019.5" x2="1930" y2="654.2"/><line x1="900" y1="1176.5" x2="1930" y2="746.1"/><line x1="900" y1="1351.4" x2="1930" y2="848.5"/><line x1="900" y1="1547.6" x2="1930" y2="963.4"/><line x1="900" y1="1769.2" x2="1930" y2="1093.1"/></g><g stroke-opacity="0.1"><line x1="611.4" y1="-5" x2="1214.8" y2="1045"/><line x1="684.4" y1="-5" x2="1306.8" y2="1045"/><line x1="754.6" y1="-5" x2="1395.3" y2="1045"/><line x1="822.1" y1="-5" x2="1480.4" y2="1045"/><line x1="887.1" y1="-5" x2="1562.3" y2="1045"/><line x1="949.8" y1="-5" x2="1641.3" y2="1045"/><line x1="1010.2" y1="-5" x2="1717.5" y2="1045"/><line x1="1068.5" y1="-5" x2="1791.0" y2="1045"/><line x1="1124.8" y1="-5" x2="1862.0" y2="1045"/><line x1="1179.2" y1="-5" x2="1930.5" y2="1045"/><line x1="1231.8" y1="-5" x2="1996.8" y2="1045"/><line x1="1282.7" y1="-5" x2="2060.9" y2="1045"/><line x1="1331.9" y1="-5" x2="2122.9" y2="1045"/><line x1="1379.5" y1="-5" x2="2183.0" y2="1045"/><line x1="1425.7" y1="-5" x2="2241.1" y2="1045"/><line x1="1470.4" y1="-5" x2="2297.5" y2="1045"/><line x1="1513.8" y1="-5" x2="2352.2" y2="1045"/><line x1="1555.9" y1="-5" x2="2405.3" y2="1045"/><line x1="1596.7" y1="-5" x2="2456.8" y2="1045"/><line x1="1636.4" y1="-5" x2="2506.8" y2="1045"/><line x1="1674.9" y1="-5" x2="2555.3" y2="1045"/><line x1="1712.4" y1="-5" x2="2602.5" y2="1045"/><line x1="1748.8" y1="-5" x2="2648.4" y2="1045"/><line x1="1784.2" y1="-5" x2="2693.0" y2="1045"/><line x1="1818.6" y1="-5" x2="2736.5" y2="1045"/><line x1="1852.2" y1="-5" x2="2778.7" y2="1045"/><line x1="1884.8" y1="-5" x2="2819.9" y2="1045"/><line x1="1916.6" y1="-5" x2="2860.0" y2="1045"/><line x1="1947.6" y1="-5" x2="2899.0" y2="1045"/><line x1="1977.8" y1="-5" x2="2937.1" y2="1045"/><line x1="2007.2" y1="-5" x2="2974.2" y2="1045"/><line x1="2036.0" y1="-5" x2="3010.4" y2="1045"/><line x1="2064.0" y1="-5" x2="3045.7" y2="1045"/><line x1="2091.3" y1="-5" x2="3080.2" y2="1045"/><line x1="2118.0" y1="-5" x2="3113.8" y2="1045"/><line x1="2144.1" y1="-5" x2="3146.7" y2="1045"/><line x1="2169.5" y1="-5" x2="3178.8" y2="1045"/><line x1="2194.4" y1="-5" x2="3210.1" y2="1045"/><line x1="2218.7" y1="-5" x2="3240.8" y2="1045"/><line x1="2242.5" y1="-5" x2="3270.7" y2="1045"/><line x1="2265.7" y1="-5" x2="3300.0" y2="1045"/><line x1="2288.4" y1="-5" x2="3328.6" y2="1045"/><line x1="2310.7" y1="-5" x2="3356.7" y2="1045"/><line x1="2332.4" y1="-5" x2="3384.1" y2="1045"/><line x1="2353.7" y1="-5" x2="3410.9" y2="1045"/><line x1="2374.5" y1="-5" x2="3437.2" y2="1045"/><line x1="2394.9" y1="-5" x2="3462.9" y2="1045"/><line x1="2414.9" y1="-5" x2="3488.1" y2="1045"/><line x1="2434.5" y1="-5" x2="3512.8" y2="1045"/><line x1="2453.7" y1="-5" x2="3536.9" y2="1045"/><line x1="2472.5" y1="-5" x2="3560.6" y2="1045"/><line x1="2490.9" y1="-5" x2="3583.9" y2="1045"/><line x1="2509.0" y1="-5" x2="3606.6" y2="1045"/><line x1="2526.7" y1="-5" x2="3629.0" y2="1045"/></g></g>
<g fill="#060606" fill-opacity=".94"><polygon points="1099.0,461.1 1172.6,450.6 1170.6,451.5 1103.0,462.4"/><polygon points="1177.7,456.1 1236.0,448.0 1234.0,448.9 1181.7,457.4"/><polygon points="1242.0,454.5 1293.7,447.2 1291.7,448.1 1246.0,455.8"/><polygon points="1299.0,453.5 1347.0,447.2 1345.0,448.1 1303.0,454.8"/><polygon points="1351.0,452.1 1396.0,446.3 1394.0,447.2 1355.0,453.4"/><polygon points="1400.6,449.3 1445.7,443.6 1443.7,444.5 1404.6,450.6"/><polygon points="1157.0,551.5 1227.5,540.1 1225.5,541.0 1161.0,555.7"/><polygon points="1229.0,544.7 1290.0,533.3 1288.0,534.2 1233.0,548.4"/><polygon points="1292.5,539.4 1346.6,529.4 1344.6,530.3 1296.5,542.5"/><polygon points="1350.0,534.5 1398.7,526.0 1396.7,526.9 1354.0,537.0"/><polygon points="1402.0,529.9 1448.5,522.1 1446.5,523.0 1406.0,531.8"/><polygon points="1131.8,668.4 1212.0,648.5 1210.0,649.4 1135.8,673.0"/><polygon points="1210.6,653.1 1281.0,635.2 1279.0,636.1 1214.6,657.2"/><polygon points="1281.0,640.5 1343.0,624.6 1341.0,625.5 1285.0,644.1"/><polygon points="1343.8,630.9 1399.3,616.9 1397.3,617.8 1347.8,634.0"/><polygon points="1400.7,621.8 1450.8,609.9 1448.8,610.8 1404.7,624.4"/><polygon points="1452.7,613.0 1499.8,602.0 1497.8,602.9 1456.7,615.0"/><polygon points="1185.0,781.2 1266.0,754.6 1264.0,755.5 1189.0,786.2"/><polygon points="1262.6,761.1 1333.0,737.6 1331.0,738.5 1266.6,765.6"/><polygon points="1333.0,743.0 1396.3,722.2 1394.3,723.1 1337.0,746.9"/><polygon points="1394.5,727.4 1452.6,708.9 1450.6,709.8 1398.5,730.8"/><polygon points="1450.8,713.5 1503.6,697.6 1501.6,698.5 1454.8,716.3"/><polygon points="1503.6,700.7 1554.6,686.0 1552.6,686.9 1507.6,703.0"/><polygon points="1313.6,871.1 1387.5,842.6 1385.5,843.5 1317.6,876.1"/><polygon points="1384.0,847.6 1447.3,823.2 1445.3,824.1 1388.0,851.7"/><polygon points="1445.6,827.1 1503.6,804.6 1501.6,805.5 1449.6,830.3"/><polygon points="1503.6,807.7 1554.6,788.0 1552.6,788.9 1507.6,810.0"/><polygon points="1436.8,955.6 1500.0,928.6 1498.0,929.5 1440.8,959.6"/><polygon points="935.0,715.3 1132.0,671.0 1132.0,673.0 935.0,717.7"/><polygon points="935.0,855.2 1003.0,835.2 1003.0,838.8 935.0,859.8"/><polygon points="1005.7,825.3 1188.7,776.5 1188.7,779.3 1005.7,828.7"/><polygon points="935.0,999.2 1055.0,960.4 1055.0,964.8 935.0,1004.8"/><polygon points="1062.0,959.2 1315.4,866.2 1315.4,869.0 1062.0,962.8"/><polygon points="1241.5,1040.4 1438.5,952.5 1438.5,955.1 1241.5,1043.6"/><polygon points="1020.0,477.5 1099.0,461.6 1099.0,462.4 1020.0,478.5"/><polygon points="1060.0,570.4 1157.0,552.5 1157.0,553.5 1060.0,571.6"/><polygon points="956.5,735.6 963.5,735.6 1014.5,827.0 1007.5,827.0"/><polygon points="998.5,839.5 1005.5,839.5 1069.1,955.6 1062.1,955.6"/><polygon points="1051.5,962.6 1058.5,962.6 1100.5,1042.0 1093.5,1042.0"/><polygon points="951.5,1006.0 958.5,1006.0 974.5,1042.0 967.5,1042.0"/></g>
<g stroke="#000" stroke-opacity=".3" stroke-width="1"><line x1="1030" y1="660" x2="1051" y2="699"/><line x1="1051" y1="699" x2="1100.7" y2="811"/><line x1="1100.7" y1="815" x2="1164" y2="938"/><line x1="1164" y1="938" x2="1213" y2="1040"/></g>
<g><g fill="#090909" transform="translate(-5,4)"><path d="M940.0 372.0 C943.2 373.1 951.1 375.3 959.0 378.8 C966.9 382.2 978.6 386.9 987.5 392.5 C996.4 398.1 1004.6 404.6 1012.5 412.5 C1020.4 420.4 1028.3 430.4 1035.0 440.0 C1041.7 449.6 1047.7 459.6 1052.5 470.0 C1057.3 480.4 1061.4 492.5 1063.8 502.5 C1066.1 512.5 1067.0 521.2 1066.8 530.0 C1066.5 538.8 1065.3 547.1 1062.5 555.0 C1059.7 562.9 1055.4 570.8 1050.0 577.5 C1044.6 584.2 1038.3 590.2 1030.0 595.0 C1021.7 599.8 1009.2 603.8 1000.0 606.0 C990.8 608.2 981.8 607.8 975.0 608.0 C968.2 608.2 964.8 607.8 959.0 607.5 C953.2 607.2 943.2 606.2 940.0 606.0 L940.0 584.0 C943.2 584.0 951.1 583.9 959.0 583.8 C966.9 583.6 978.6 584.0 987.5 583.0 C996.4 582.0 1005.0 580.5 1012.5 577.5 C1020.0 574.5 1027.3 570.4 1032.5 565.0 C1037.7 559.6 1041.5 552.1 1043.8 545.0 C1046.0 537.9 1046.6 530.4 1046.0 522.5 C1045.4 514.6 1043.5 507.1 1040.0 497.5 C1036.5 487.9 1030.8 475.4 1025.0 465.0 C1019.2 454.6 1012.1 443.5 1005.0 435.0 C997.9 426.5 990.2 419.6 982.5 413.8 C974.8 407.9 966.1 403.6 959.0 400.0 C951.9 396.4 943.2 393.3 940.0 392.0 Z"/><path d="M940.0 408.0 C943.2 410.6 953.6 419.2 959.0 423.8 C964.4 428.2 967.8 429.4 972.5 435.0 C977.2 440.6 982.5 449.6 987.5 457.5 C992.5 465.4 998.3 475.0 1002.5 482.5 C1006.7 490.0 1010.6 497.1 1012.5 502.5 C1014.4 507.9 1014.4 510.8 1013.8 515.0 C1013.1 519.2 1011.5 524.2 1008.8 527.5 C1006.0 530.8 1003.1 533.1 997.5 535.0 C991.9 536.9 981.4 537.6 975.0 538.8 C968.6 539.9 964.8 540.7 959.0 541.8 C953.2 542.8 943.2 544.5 940.0 545.0 L940.0 524.0 C943.2 523.3 951.5 521.7 959.0 520.0 C966.5 518.3 979.6 515.8 985.0 513.8 C990.4 511.7 990.3 510.0 991.2 507.5 C992.2 505.0 992.0 502.9 990.5 498.8 C989.0 494.6 985.9 489.0 982.5 482.5 C979.1 476.0 973.9 466.2 970.0 460.0 C966.1 453.8 964.0 451.7 959.0 445.0 C954.0 438.3 943.2 424.2 940.0 420.0 Z"/><path d="M940.0 440.0 C943.2 445.0 954.8 463.3 959.0 470.0 C963.2 476.7 962.8 475.6 965.0 480.0 C967.2 484.4 973.5 493.0 972.5 496.2 C971.5 499.5 964.4 498.1 959.0 499.2 C953.6 500.4 943.2 502.4 940.0 503.0 Z"/></g><g fill="#fdfdfd"><path d="M940.0 372.0 C943.2 373.1 951.1 375.3 959.0 378.8 C966.9 382.2 978.6 386.9 987.5 392.5 C996.4 398.1 1004.6 404.6 1012.5 412.5 C1020.4 420.4 1028.3 430.4 1035.0 440.0 C1041.7 449.6 1047.7 459.6 1052.5 470.0 C1057.3 480.4 1061.4 492.5 1063.8 502.5 C1066.1 512.5 1067.0 521.2 1066.8 530.0 C1066.5 538.8 1065.3 547.1 1062.5 555.0 C1059.7 562.9 1055.4 570.8 1050.0 577.5 C1044.6 584.2 1038.3 590.2 1030.0 595.0 C1021.7 599.8 1009.2 603.8 1000.0 606.0 C990.8 608.2 981.8 607.8 975.0 608.0 C968.2 608.2 964.8 607.8 959.0 607.5 C953.2 607.2 943.2 606.2 940.0 606.0 L940.0 584.0 C943.2 584.0 951.1 583.9 959.0 583.8 C966.9 583.6 978.6 584.0 987.5 583.0 C996.4 582.0 1005.0 580.5 1012.5 577.5 C1020.0 574.5 1027.3 570.4 1032.5 565.0 C1037.7 559.6 1041.5 552.1 1043.8 545.0 C1046.0 537.9 1046.6 530.4 1046.0 522.5 C1045.4 514.6 1043.5 507.1 1040.0 497.5 C1036.5 487.9 1030.8 475.4 1025.0 465.0 C1019.2 454.6 1012.1 443.5 1005.0 435.0 C997.9 426.5 990.2 419.6 982.5 413.8 C974.8 407.9 966.1 403.6 959.0 400.0 C951.9 396.4 943.2 393.3 940.0 392.0 Z"/><path d="M940.0 408.0 C943.2 410.6 953.6 419.2 959.0 423.8 C964.4 428.2 967.8 429.4 972.5 435.0 C977.2 440.6 982.5 449.6 987.5 457.5 C992.5 465.4 998.3 475.0 1002.5 482.5 C1006.7 490.0 1010.6 497.1 1012.5 502.5 C1014.4 507.9 1014.4 510.8 1013.8 515.0 C1013.1 519.2 1011.5 524.2 1008.8 527.5 C1006.0 530.8 1003.1 533.1 997.5 535.0 C991.9 536.9 981.4 537.6 975.0 538.8 C968.6 539.9 964.8 540.7 959.0 541.8 C953.2 542.8 943.2 544.5 940.0 545.0 L940.0 524.0 C943.2 523.3 951.5 521.7 959.0 520.0 C966.5 518.3 979.6 515.8 985.0 513.8 C990.4 511.7 990.3 510.0 991.2 507.5 C992.2 505.0 992.0 502.9 990.5 498.8 C989.0 494.6 985.9 489.0 982.5 482.5 C979.1 476.0 973.9 466.2 970.0 460.0 C966.1 453.8 964.0 451.7 959.0 445.0 C954.0 438.3 943.2 424.2 940.0 420.0 Z"/><path d="M940.0 440.0 C943.2 445.0 954.8 463.3 959.0 470.0 C963.2 476.7 962.8 475.6 965.0 480.0 C967.2 484.4 973.5 493.0 972.5 496.2 C971.5 499.5 964.4 498.1 959.0 499.2 C953.6 500.4 943.2 502.4 940.0 503.0 Z"/></g></g>
</svg>
<div id="win">
<div class="t" id="title" style="left:382.00px;top:8px;letter-spacing:0.200px;">Home</div>
<div class="abs" style="left:723px;top:18px;width:8px;height:1px;background:#2a2a2a"></div>
<div class="abs" style="left:751px;top:12px;width:8px;height:8px;border:1px solid #2a2a2a"></div>
<div class="abs" style="left:774px;top:7px;width:18px;height:18px;border-radius:9px;background:#1f9ede"></div>
<svg style="left:774px;top:7px" width="18" height="18" viewBox="0 0 18 18"><path d="M5.600 5.600 L12.400 12.400 M12.400 5.600 L5.600 12.400" stroke="#fff" stroke-width="1.900" stroke-linecap="round"/></svg>
<div class="t menu" id="m_File" style="left:7.46px;top:38px;letter-spacing:-0.480px;">File</div>
<div class="t menu" id="m_Edit" style="left:43.58px;top:38px;letter-spacing:0.180px;">Edit</div>
<div class="t menu" id="m_View" style="left:83.02px;top:38px;letter-spacing:-0.120px;">View</div>
<div class="t menu" id="m_Go" style="left:128.48px;top:38px;letter-spacing:-1.800px;">Go</div>
<div class="t menu" id="m_Bookmarks" style="left:160.10px;top:38px;letter-spacing:0.248px;">Bookmarks</div>
<div class="t menu" id="m_Help" style="left:245.04px;top:38px;letter-spacing:-0.300px;">Help</div>
<svg style="left:14px;top:72px" width="16" height="18" viewBox="0 0 16 18"><path d="M11 2.500 L4.600 9 L11 15.500" fill="none" stroke="#8b8b8b" stroke-width="1.900" stroke-linecap="butt"/></svg>
<svg style="left:53px;top:72px" width="16" height="18" viewBox="0 0 16 18"><path d="M5 2.500 L11.400 9 L5 15.500" fill="none" stroke="#8b8b8b" stroke-width="1.900"/></svg>
<svg style="left:91px;top:73px" width="18" height="16" viewBox="0 0 18 16"><path d="M2.300 11.400 L9 4.800 L15.700 11.400" fill="none" stroke="#222" stroke-width="2.100"/></svg>
<div class="btn" style="left:125px;top:64px;width:28px;height:34px;border-radius:4px 0 0 4px"></div>
<div class="btn" style="left:242px;top:64px;width:27px;height:34px;border-radius:0 4px 4px 0"></div>
<div class="btn on" style="left:152px;top:64px;width:91px;height:34px;border-radius:0"></div>
<svg style="left:135px;top:75px" width="8" height="12" viewBox="0 0 8 12"><path d="M6.500 0.300 V11.700 L0.800 6 Z" fill="#222"/></svg>
<svg style="left:251px;top:75px" width="8" height="12" viewBox="0 0 8 12"><path d="M1.500 0.300 V11.700 L7.200 6 Z" fill="#8b8b8b"/></svg>
<svg style="left:163px;top:73px" width="16" height="16" viewBox="0 0 16 16" fill="#222"><path d="M8 1 L15.8 8.8 H14 V15 H2 V8.8 H0.2 Z M11.3 3 H13.3 V6.5 L11.3 4.5 Z"/></svg>
<div class="t" id="itsfoss" style="left:184.51px;top:73px;letter-spacing:-0.150px;font-weight:bold;color:#2b2b2b">itsfoss</div>
<svg style="left:613px;top:73px" width="16" height="16" viewBox="0 0 16 16"><circle cx="2" cy="12.300" r="1.900" fill="#222"/><path d="M8.300 2.200 H13.400 V11.200 H7" fill="none" stroke="#222" stroke-width="2.200"/><path d="M9.300 7.400 L4.900 11.200 L9.300 15 Z" fill="#222"/></svg>
<svg style="left:651px;top:72px" width="17" height="17" viewBox="0 0 17 17"><circle cx="7" cy="7" r="5.300" fill="none" stroke="#222" stroke-width="1.900"/><path d="M10.800 10.800 L15.300 15.300" stroke="#222" stroke-width="2.100" stroke-linecap="round"/></svg>
<div class="btn on" style="left:681px;top:64px;width:36px;height:34px"></div>
<svg style="left:692px;top:74px" width="14" height="14" viewBox="0 0 14 14" fill="#222"><rect x="0" y="0" width="6" height="6" rx=".6"/><rect x="8" y="0" width="6" height="6" rx=".6"/><rect x="0" y="8" width="6" height="6" rx=".6"/><rect x="8" y="8" width="6" height="6" rx=".6"/></svg>
<svg style="left:731px;top:74px" width="15" height="14" viewBox="0 0 15 14" fill="#222"><rect x="0" y="0" width="3.600" height="3.600" rx=".6"/><rect x="0" y="5.200" width="3.600" height="3.600" rx=".6"/><rect x="0" y="10.400" width="3.600" height="3.600" rx=".6"/><rect x="5.400" y="1" width="9.100" height="1.700"/><rect x="5.400" y="6.200" width="9.100" height="1.700"/><rect x="5.400" y="11.400" width="9.100" height="1.700"/></svg>
<svg style="left:771px;top:76px" width="13" height="10" viewBox="0 0 13 10" fill="#222"><rect x="0" y="0" width="4.200" height="1.800"/><rect x="0" y="4.100" width="4.200" height="1.800"/><rect x="0" y="8.200" width="4.200" height="1.800"/><rect x="8" y="0" width="4.200" height="1.800"/><rect x="8" y="4.100" width="4.200" height="1.800"/><rect x="8" y="8.200" width="4.200" height="1.800"/></svg>
<div class="abs" id="tbline"></div>
<div class="abs" id="side"></div><div class="abs" id="sideline"></div><div class="abs" id="content"></div>
<svg style="left:8px;top:114px" width="12" height="7" viewBox="0 0 12 7"><path d="M0.300 0.300 H11.700 L6 6.600 Z" fill="#8c8c8c"/></svg>
<div class="t hdr" id="h_mycomp" style="left:26.18px;top:109px;letter-spacing:-0.144px;">My Computer</div>
<svg style="left:29px;top:136px" width="16" height="16" viewBox="0 0 16 16" fill="#222"><path d="M8 1 L15.8 8.8 H14 V15 H2 V8.8 H0.2 Z M11.3 3 H13.3 V6.5 L11.3 4.5 Z"/></svg>
<div class="t si" id="s_Home" style="left:49.28px;top:136px;letter-spacing:0.420px;">Home</div>
<svg style="left:29px;top:163px" width="16" height="16" viewBox="0 0 16 16" fill="#222"><path d="M2 2 H14 Q15 2 15 3 V13 Q15 14 14 14 H2 Q1 14 1 13 V3 Q1 2 2 2 Z M2 12 V13 H14 V12 Z" fill-rule="evenodd"/></svg>
<div class="t si" id="s_Desktop" style="left:49.28px;top:163px;letter-spacing:0.240px;">Desktop</div>
<svg style="left:29px;top:190px" width="16" height="16" viewBox="0 0 16 16" fill="#222"><path d="M3 1 H10 L14 5 V15 H3 Z M10 2.2 V5 H12.8 Z" fill-rule="evenodd"/></svg>
<div class="t si" id="s_Documents" style="left:49.28px;top:190px;letter-spacing:0.201px;">Documents</div>
<svg style="left:29px;top:217px" width="16" height="16" viewBox="0 0 16 16" fill="#222"><path d="M4.6 2 H13.4 V12.2 A2.5 2.1 0 1 1 11.6 10.2 V4.7 H6.4 V13.3 A2.5 2.1 0 1 1 4.6 11.3 Z"/></svg>
<div class="t si" id="s_Music" style="left:49.28px;top:217px;letter-spacing:0.270px;">Music</div>
<svg style="left:29px;top:244px" width="16" height="16" viewBox="0 0 16 16" fill="#222"><path d="M5.5 3 H10.5 L11.5 5 H14 Q15 5 15 6 V13 Q15 14 14 14 H2 Q1 14 1 13 V6 Q1 5 2 5 H4.5 Z M8 6.5 A2.9 2.9 0 1 0 8 12.3 A2.9 2.9 0 1 0 8 6.5 Z" fill-rule="evenodd"/></svg>
<div class="t si" id="s_Pictures" style="left:49.28px;top:244px;letter-spacing:0.027px;">Pictures</div>
<svg style="left:29px;top:271px" width="16" height="16" viewBox="0 0 16 16" fill="#222"><path d="M2 1 H14 V16 H2 Z M5 2.2 V8 H11 V2.2 Z M5 9.2 V14.8 H11 V9.2 Z M3 2.5 V3.7 H4 V2.5 Z M3 5 V6.2 H4 V5 Z M3 7.5 V8.7 H4 V7.5 Z M3 10 V11.2 H4 V10 Z M3 12.5 V13.7 H4 V12.5 Z M12 2.5 V3.7 H13 V2.5 Z M12 5 V6.2 H13 V5 Z M12 7.5 V8.7 H13 V7.5 Z M12 10 V11.2 H13 V10 Z M12 12.5 V13.7 H13 V12.5 Z" fill-rule="evenodd"/></svg>
<div class="t si" id="s_Videos" style="left:50.54px;top:271px;letter-spacing:-0.036px;">Videos</div>
<svg style="left:29px;top:298px" width="16" height="16" viewBox="0 0 16 16" fill="#222"><path d="M6.4 1 H9.8 V8.2 H14 L8.1 15 L2.2 8.2 H6.4 Z"/></svg>
<div class="t si" id="s_Downloads" style="left:49.28px;top:298px;letter-spacing:0.135px;">Downloads</div>
<svg style="left:29px;top:325px" width="16" height="16" viewBox="0 0 16 16" fill="#222"><circle cx="8.5" cy="8.6" r="6.7" fill="none" stroke="#222" stroke-width="1.7"/><path d="M5.8 6.8 L8.4 9.3 L12 5.8" fill="none" stroke="#222" stroke-width="1.1"/></svg>
<div class="t si" id="s_Recent" style="left:49.28px;top:325px;letter-spacing:-0.144px;">Recent</div>
<svg style="left:29px;top:352px" width="16" height="16" viewBox="0 0 16 16" fill="#222"><rect x="2" y="1.9" width="12" height="14" rx="2.3" fill="none" stroke="#1c1c1c" stroke-width="2"/><path d="M8 4.3 A4.1 4.1 0 1 1 5.3 11.5 L3.6 12.4 L4.2 10 A4.1 4.1 0 0 1 8 4.3 Z M8.1 6.5 A1.9 1.9 0 1 0 8.1 10.3 A1.9 1.9 0 1 0 8.1 6.5 Z" fill-rule="evenodd"/></svg>
<div class="t si" id="s_FileSystem" style="left:51.08px;top:352px;letter-spacing:-0.882px;">File System</div>
<svg style="left:29px;top:379px" width="16" height="16" viewBox="0 0 16 16" fill="#222"><path d="M1 3 H15 V5 H1 Z M5 1.2 H11 V3 H5 Z M2.2 5 H4.2 V13 H11.8 V5 H13.8 V15 H2.2 Z"/></svg>
<div class="t si" id="s_Trash" style="left:50.36px;top:379px;letter-spacing:-0.360px;">Trash</div>
<div class="abs" style="left:50px;top:367px;width:70px;height:2px;background:#ababab"></div><div class="abs" style="left:50px;top:367px;width:34px;height:2px;background:#1a72b4"></div>
<svg style="left:8px;top:411px" width="12" height="7" viewBox="0 0 12 7"><path d="M0.300 0.300 H11.700 L6 6.600 Z" fill="#8c8c8c"/></svg>
<div class="t hdr" id="h_net" style="left:26.36px;top:406px;letter-spacing:0.270px;">Network</div>
<svg style="left:29px;top:433px" width="16" height="16" viewBox="0 0 16 16" fill="#222"><circle cx="8" cy="8" r="7.8"/><path d="M6.5 1.8 Q9 2.2 9.4 4 Q8 4.6 7.4 6 Q5.6 6.2 5.2 7.8 Q6.6 8.8 8 8.6 Q9.6 10 8.8 11.6 Q8 13 7 14.2 Q5.6 12.6 5.8 10.8 Q4 10.2 3.2 8.6 Q2.4 7.4 1.6 7.6 Q2.2 3.4 6.5 1.8 Z M11.4 3.2 Q13.4 4.4 14 6.6 Q12.8 6.4 12.2 7.4 Q11 7 11.2 5.6 Q12 4.4 11.4 3.2 Z M13.6 9 Q13.4 11.6 11.6 13 Q11.2 11.4 12 10.2 Q12.6 9 13.6 9 Z" fill="#f2f2f2"/></svg>
<div class="t si" id="s_Network" style="left:49.28px;top:433px;letter-spacing:0.510px;">Network</div>
<svg style="left:209px;top:123px" width="56" height="56" viewBox="0 0 56 56">
<rect x="0" y="0.800" width="56" height="53" rx="3" fill="#c79240" opacity=".5"/>
<rect x="0" y="0" width="56" height="53" rx="3" fill="#e0a94f"/>
<path d="M0 3 Q0 0 3 0 H53 Q56 0 56 3 V46 H0 Z" fill="#f8c570"/></svg>
<div class="t lbl" id="f_Desktop" style="left:211.28px;top:185px;letter-spacing:0.150px;">Desktop</div>
<svg style="left:333px;top:123px" width="56" height="56" viewBox="0 0 56 56">
<path d="M0 49 V5 Q0 2 3 2 H18.5 Q20 2 21.2 3 L26 7.3 Q27 8 28.5 8 H53 Q56 8 56 11 V49 Z" fill="#e0a94f"/>
<rect x="3.8" y="10.8" width="48.4" height="12" rx="2" fill="#e6e6e6"/>
<path d="M0 18.500 Q0 15.500 3 15.500 H53 Q56 15.500 56 18.500 V48.500 Q56 51.500 53 51.500 H3 Q0 51.500 0 48.500 Z" fill="#c79240" opacity=".55"/>
<path d="M0 18.500 Q0 15.500 3 15.500 H53 Q56 15.500 56 18.500 V48 Q56 51 53 51 H3 Q0 51 0 48 Z" fill="#f8c570"/>
<g transform="translate(21.00,22.10) scale(1.000,1.000)" fill="#474747"><path d="M0 0 H9.600 L16 6.400 V20 H0 Z M9.600 1.800 V6.400 H14.200 Z" fill-rule="evenodd"/></g></svg>
<div class="t lbl" id="f_Documents" style="left:327.90px;top:185px;letter-spacing:0.112px;">Documents</div>
<svg style="left:457px;top:123px" width="56" height="56" viewBox="0 0 56 56">
<path d="M0 49 V5 Q0 2 3 2 H18.5 Q20 2 21.2 3 L26 7.3 Q27 8 28.5 8 H53 Q56 8 56 11 V49 Z" fill="#e0a94f"/>
<rect x="3.8" y="10.8" width="48.4" height="12" rx="2" fill="#e6e6e6"/>
<path d="M0 18.500 Q0 15.500 3 15.500 H53 Q56 15.500 56 18.500 V48.500 Q56 51.500 53 51.500 H3 Q0 51.500 0 48.500 Z" fill="#c79240" opacity=".55"/>
<path d="M0 18.500 Q0 15.500 3 15.500 H53 Q56 15.500 56 18.500 V48 Q56 51 53 51 H3 Q0 51 0 48 Z" fill="#f8c570"/>
<g transform="translate(20.30,22.20) scale(1.000,1.000)" fill="#474747"><path d="M5.650 0 H11.350 V11.700 H17 L8.500 20 L0 11.700 H5.650 Z"/></g></svg>
<div class="t lbl" id="f_Downloads" style="left:452.80px;top:185px;letter-spacing:0.021px;">Downloads</div>
<svg style="left:581px;top:123px" width="56" height="56" viewBox="0 0 56 56">
<path d="M0 49 V5 Q0 2 3 2 H18.5 Q20 2 21.2 3 L26 7.3 Q27 8 28.5 8 H53 Q56 8 56 11 V49 Z" fill="#e0a94f"/>
<rect x="3.8" y="10.8" width="48.4" height="12" rx="2" fill="#e6e6e6"/>
<path d="M0 18.500 Q0 15.500 3 15.500 H53 Q56 15.500 56 18.500 V48.500 Q56 51.500 53 51.500 H3 Q0 51.500 0 48.500 Z" fill="#c79240" opacity=".55"/>
<path d="M0 18.500 Q0 15.500 3 15.500 H53 Q56 15.500 56 18.500 V48 Q56 51 53 51 H3 Q0 51 0 48 Z" fill="#f8c570"/>
<g transform="translate(18.80,24.20) scale(1.020,1.000)" fill="#474747"><path d="M6 0 H20 V15.600 A3.700 3 0 1 1 17.700 12.900 V3.700 H8.300 V17 A3.700 3 0 1 1 6 14.300 Z"/></g></svg>
<div class="t lbl" id="f_Music" style="left:593.00px;top:185px;letter-spacing:0.182px;">Music</div>
<svg style="left:705px;top:123px" width="56" height="56" viewBox="0 0 56 56">
<path d="M0 49 V5 Q0 2 3 2 H18.5 Q20 2 21.2 3 L26 7.3 Q27 8 28.5 8 H53 Q56 8 56 11 V49 Z" fill="#e0a94f"/>
<rect x="3.8" y="10.8" width="48.4" height="12" rx="2" fill="#e6e6e6"/>
<path d="M0 18.500 Q0 15.500 3 15.500 H53 Q56 15.500 56 18.500 V48.500 Q56 51.500 53 51.500 H3 Q0 51.500 0 48.500 Z" fill="#c79240" opacity=".55"/>
<path d="M0 18.500 Q0 15.500 3 15.500 H53 Q56 15.500 56 18.500 V48 Q56 51 53 51 H3 Q0 51 0 48 Z" fill="#f8c570"/>
<g transform="translate(15.70,23.30) scale(1.000,1.000)" fill="#474747"><path d="M6.200 0 H19.400 L21 4.200 H24 Q25.600 4.200 25.600 5.800 V18.400 Q25.600 20 24 20 H1.600 Q0 20 0 18.400 V5.800 Q0 4.200 1.600 4.200 H4.600 Z M12.800 5.300 A5.700 5.700 0 1 0 12.800 16.700 A5.700 5.700 0 1 0 12.800 5.300 Z" fill-rule="evenodd"/></g></svg>
<div class="t lbl" id="f_Pictures" style="left:709.08px;top:185px;letter-spacing:-0.154px;">Pictures</div>
<svg style="left:209px;top:249px" width="56" height="56" viewBox="0 0 56 56">
<path d="M0 49 V5 Q0 2 3 2 H18.5 Q20 2 21.2 3 L26 7.3 Q27 8 28.5 8 H53 Q56 8 56 11 V49 Z" fill="#e0a94f"/>
<rect x="3.8" y="10.8" width="48.4" height="12" rx="2" fill="#e6e6e6"/>
<path d="M0 18.500 Q0 15.500 3 15.500 H53 Q56 15.500 56 18.500 V48.500 Q56 51.500 53 51.500 H3 Q0 51.500 0 48.500 Z" fill="#c79240" opacity=".55"/>
<path d="M0 18.500 Q0 15.500 3 15.500 H53 Q56 15.500 56 18.500 V48 Q56 51 53 51 H3 Q0 51 0 48 Z" fill="#f8c570"/>
<g transform="translate(18.80,24.50) scale(1.000,1.000)" fill="#474747"><circle cx="16.200" cy="3.600" r="3.600"/><circle cx="3.600" cy="9.800" r="3.600"/><circle cx="16.200" cy="16" r="3.600"/><path d="M16.200 3.600 L3.600 9.800 L16.200 16" fill="none" stroke="#474747" stroke-width="2.200"/></g></svg>
<div class="t lbl" id="f_Public" style="left:218.48px;top:311px;letter-spacing:0.108px;">Public</div>
<svg style="left:333px;top:249px" width="56" height="56" viewBox="0 0 56 56">
<path d="M0 49 V5 Q0 2 3 2 H18.5 Q20 2 21.2 3 L26 7.3 Q27 8 28.5 8 H53 Q56 8 56 11 V49 Z" fill="#e0a94f"/>
<rect x="3.8" y="10.8" width="48.4" height="12" rx="2" fill="#e6e6e6"/>
<path d="M0 18.500 Q0 15.500 3 15.500 H53 Q56 15.500 56 18.500 V48.500 Q56 51.500 53 51.500 H3 Q0 51.500 0 48.500 Z" fill="#c79240" opacity=".55"/>
<path d="M0 18.500 Q0 15.500 3 15.500 H53 Q56 15.500 56 18.500 V48 Q56 51 53 51 H3 Q0 51 0 48 Z" fill="#f8c570"/>
<g transform="translate(21.30,24.70) scale(1.000,1.000)" fill="#474747"><path d="M0 0 H9 L14.700 5.700 V13.400 H0 Z M9 1.700 V5.700 H13 Z" fill-rule="evenodd"/><rect x="0" y="13.400" width="14.700" height="6.600" opacity=".5"/></g></svg>
<div class="t lbl" id="f_Templates" style="left:331.68px;top:311px;letter-spacing:0.090px;">Templates</div>
<svg style="left:457px;top:249px" width="56" height="56" viewBox="0 0 56 56">
<path d="M0 49 V5 Q0 2 3 2 H18.5 Q20 2 21.2 3 L26 7.3 Q27 8 28.5 8 H53 Q56 8 56 11 V49 Z" fill="#e0a94f"/>
<rect x="3.8" y="10.8" width="48.4" height="12" rx="2" fill="#e6e6e6"/>
<path d="M0 18.500 Q0 15.500 3 15.500 H53 Q56 15.500 56 18.500 V48.500 Q56 51.500 53 51.500 H3 Q0 51.500 0 48.500 Z" fill="#c79240" opacity=".55"/>
<path d="M0 18.500 Q0 15.500 3 15.500 H53 Q56 15.500 56 18.500 V48 Q56 51 53 51 H3 Q0 51 0 48 Z" fill="#f8c570"/>
<g transform="translate(20.70,24.70) scale(1.006,1.000)" fill="#474747"><path d="M0 0 H16 V20 H0 Z M4 1.300 V9.300 H12 V1.300 Z M4 10.700 V18.700 H12 V10.700 Z M1.300 1.300 V2.900 H2.700 V1.300 Z M1.300 4.500 V6.100 H2.700 V4.500 Z M1.300 7.700 V9.300 H2.700 V7.700 Z M1.300 10.900 V12.500 H2.700 V10.900 Z M1.300 14.100 V15.700 H2.700 V14.100 Z M1.300 17.300 V18.700 H2.700 V17.300 Z M13.300 1.300 V2.900 H14.700 V1.300 Z M13.300 4.500 V6.100 H14.700 V4.500 Z M13.300 7.700 V9.300 H14.700 V7.700 Z M13.300 10.900 V12.500 H14.700 V10.900 Z M13.300 14.100 V15.700 H14.700 V14.100 Z M13.300 17.300 V18.700 H14.700 V17.300 Z" fill-rule="evenodd"/></g></svg>
<div class="t lbl" id="f_Videos" style="left:466.30px;top:311px;letter-spacing:-0.144px;">Videos</div>
<div class="abs" id="stline"></div><div class="abs" id="status"></div>
<div class="btn on" style="left:4px;top:556px;width:26px;height:24px;border-radius:3px"></div>
<div class="btn" style="left:34px;top:556px;width:26px;height:24px;border-radius:3px"></div>
<div class="abs" style="left:68px;top:557px;width:1px;height:22px;background:#dcdcdc"></div>
<div class="btn" style="left:77px;top:556px;width:26px;height:24px;border-radius:3px"></div>
<svg style="left:11px;top:563.500px" width="11" height="9.500" viewBox="0 0 12 11" fill="#222"><path d="M0 0.500 H4.500 L5.500 2 H11 V3.500 H0 Z M0 4.500 H11.500 V10.500 H0 Z"/></svg>
<svg style="left:42px;top:562.500px" width="10.500" height="10.500" viewBox="0 0 12 12" fill="#222"><circle cx="2" cy="1.800" r="1.600"/><path d="M1.400 2 H2.600 V9.400 H8 V10.600 H1.400 Z M2 5.400 H8 V6.600 H2 Z"/><rect x="9" y="5" width="1.600" height="1.600"/><rect x="9" y="9.200" width="1.600" height="1.600"/></svg>
<svg style="left:84px;top:562.800px" width="11" height="9" viewBox="0 0 12 10"><rect x=".75" y=".75" width="10.500" height="8.500" fill="none" stroke="#222" stroke-width="1.500"/><path d="M6.300 2.400 V7.600 L3 5 Z" fill="#222"/></svg>
<div class="t" id="st_text" style="left:315.72px;top:560px;letter-spacing:-0.254px;color:#3b3b3b">8 items, Free space: 10.3 GB</div>
<div class="abs" style="left:699px;top:565px;width:94px;height:5px;border-radius:3px;background:#c9c9c9"></div>
<div class="abs" style="left:699px;top:565px;width:46px;height:5px;border-radius:3px;background:#1f9ede"></div>
<div class="abs" style="left:737px;top:559px;width:17px;height:17px;border-radius:9px;background:#f3f3f3;border:1px solid #b9b9b9"></div>
</div>
<div id="panel">
<svg style="left:5px;top:4px" width="32" height="32" viewBox="0 0 32 32" fill="none" stroke="#efefef"><circle cx="15.900" cy="16.100" r="14.800" stroke-width="2.800"/><path d="M8.600 8 V18.500 Q8.600 22.700 12.800 22.700 H19.200 Q23.400 22.700 23.400 18.500 V13.400 Q23.400 10.800 20.850 10.800 Q18.300 10.800 18.300 13.400 V18.800 M18.300 13.400 Q18.300 10.800 15.700 10.800 Q13.150 10.800 13.150 13.400 V18.800" stroke-width="2.550"/></svg>
<div class="abs" style="left:50px;top:1px;width:1px;height:38px;background:#484848"></div>
<div class="abs" style="left:59px;top:0;width:38px;height:40px;background:#525252"></div><div class="abs" style="left:59px;top:38px;width:38px;height:2px;background:#1f9ede"></div>
<svg style="left:64px;top:6px" width="28" height="26" viewBox="0 0 28 26">
<path d="M0 24 V2 Q0 0 2 0 H9.500 Q10.500 0 11.300 .7 L13.600 2.500 Q14.300 3 15.300 3 H26 Q28 3 28 5 V24 Z" fill="#e0a94f"/>
<rect x="2" y="5" width="24" height="6" rx="1.200" fill="#e4e8ee"/>
<rect x="0" y="7.300" width="28" height="18.200" rx="2" fill="#f8c570"/></svg>
<div class="abs" style="left:104px;top:5px;width:28px;height:28px;border-radius:6px;background:#ff7139"></div>
<svg style="left:104px;top:5px" width="28" height="28" viewBox="0 0 28 28"><path d="M14 24.300 A10 10 0 0 1 4.600 11 Q5.200 8.600 7.200 6.900 Q7.300 8.600 8.200 9.600 Q9.300 7.900 11 8.200 Q10.800 9 11.500 9.700 Q12.800 9.100 14.400 9.300 Q13.800 6.700 16.700 3.500 Q17.700 6.400 21.500 9.200 Q22.300 8.800 22.600 8.200 Q24.600 11.800 23.800 16 A10 10 0 0 1 14 24.300 Z" fill="#fff"/><path d="M14.300 19.700 A4.400 4.400 0 0 1 10.200 14 Q11.800 14.700 13.200 13.800 Q14.400 12.900 13.400 12.200 Q12.600 11.700 11.400 11.900 Q12.800 10.400 14.900 10.500 Q18.700 11.200 18.700 15.200 A4.400 4.400 0 0 1 14.300 19.700 Z" fill="#ff7139"/></svg>
<div class="abs" style="left:143.500px;top:4.300px;width:29px;height:29px;border-radius:6.500px;background:linear-gradient(#313131,#232323);border:1.500px solid #0e0e0e"></div>
<div class="t" style="left:146.500px;top:4px;font-size:8.500px;font-weight:bold;color:#eee;line-height:12px;height:12px">$</div><div class="abs" style="left:153px;top:15px;width:6px;height:1px;background:#eee"></div>
<svg style="left:1704px;top:12px" width="11" height="16" viewBox="0 0 11 16"><ellipse cx="5.500" cy="8" rx="5.500" ry="8" fill="#4b4b4b"/><path d="M2.500 5 L8 10.500 L5.500 13 V3 L8 5.500 L2.500 11" fill="none" stroke="#6d6d6d" stroke-width="1"/></svg>
<svg style="left:1726px;top:12px" width="14" height="16" viewBox="0 0 14 16"><rect x="1" y="3" width="12" height="12" rx="1" fill="none" stroke="#eee" stroke-width="2"/><rect x="4.500" y="0.500" width="5" height="3.500" rx="1" fill="#eee"/><rect x="6" y="5.500" width="2" height="4.500" fill="#eee"/><rect x="6" y="11" width="2" height="2" fill="#eee"/></svg>
<svg style="left:1749px;top:12px" width="17" height="16" viewBox="0 0 17 16"><path d="M8 0.800 Q11 2.800 15 2.800 Q15 11 8 15.200 Q1 11 1 2.800 Q5 2.800 8 0.800 Z" fill="none" stroke="#eee" stroke-width="1.500"/><path d="M8 3.200 Q10 4.500 12.800 4.700 Q12.600 9.800 8 12.800 Z" fill="#7a7a7a"/><path d="M8 3.200 Q6 4.500 3.200 4.700 Q3.400 9.800 8 12.800 Z" fill="#dcdcdc"/><circle cx="13" cy="13" r="3.100" fill="#e5623a"/></svg>
<svg style="left:1776px;top:12px" width="16" height="16" viewBox="0 0 16 16" fill="#e6e6e6"><path d="M7.500 1.500 Q11.500 2.500 11.300 7 Q11.300 10 13 12 L1 11.500 Q3.500 9 3.800 6 Q4.200 2 7.500 1.500 Z" transform="rotate(12 8 8)"/><path d="M5.500 13.500 Q7 15.500 9.500 14.200 Z"/><circle cx="12" cy="4" r="3" stroke="#2d2d2d" stroke-width="1"/></svg>
<div class="t pt" id="p_one" style="left:1797.50px;top:12px;">1</div>
<svg style="left:1814px;top:12px" width="16" height="16" viewBox="0 0 16 16" fill="#eee"><rect x="5" y="0" width="6" height="5"/><rect x="0" y="11" width="6" height="5"/><rect x="10" y="11" width="6" height="5"/><path d="M7.250 5 H8.750 V7.250 H13.750 V11 H12.250 V8.750 H3.750 V11 H2.250 V7.250 H7.250 Z"/></svg>
<svg style="left:1840px;top:12px" width="17" height="16" viewBox="0 0 17 16"><path d="M0.500 5.500 H3.500 L8 1.500 V14.500 L3.500 10.500 H0.500 Z" fill="#eee"/><path d="M10 5 Q12.200 8 10 11" fill="none" stroke="#eee" stroke-width="1.500"/><path d="M12.500 2.500 Q16.500 8 12.500 13.500" fill="none" stroke="#7d7d7d" stroke-width="1.500"/></svg>
<div class="t pt" id="p_clock" style="left:1865.28px;top:12px;letter-spacing:0.315px;">17:35</div>
<div class="abs" style="left:1908px;top:4px;width:8px;height:32px;background:#474747"></div>
</div>
</body></html>
